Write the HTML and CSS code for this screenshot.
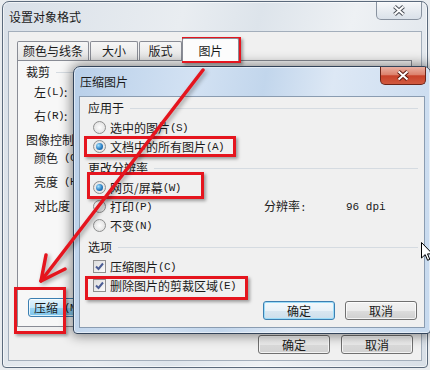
FILE: index.html
```html
<!DOCTYPE html>
<html lang="zh-CN">
<head>
  <meta charset="UTF-8" />
  <meta name="viewport" content="width=device-width, initial-scale=1.0"/>
  <title>压缩图片</title>

  <link rel="stylesheet" href="styles.css">
</head>
<body>
  <!-- back dialog, inactive -->
  <div class="window outer-window">
    <div class="titlebar">
      <span class="window-title">设置对象格式</span>
      <span class="close-btn">
        <svg width="14" height="11" viewBox="0 0 14 11">
          <path d="M2.5 1.5 L11.5 9.5 M11.5 1.5 L2.5 9.5" stroke="#4a4f57" stroke-width="4" />
          <path d="M2.5 1.5 L11.5 9.5 M11.5 1.5 L2.5 9.5" stroke="#fff" stroke-width="2" />
        </svg>
      </span>
    </div>
    <div class="client outer-client">
      <div class="tabs">
        <div class="tab">颜色与线条</div>
        <div class="tab">大小</div>
        <div class="tab">版式</div>
        <div class="tab active">图片</div>
      </div>
      <div class="tab-panel">
        <div class="group-title">裁剪</div>
        <div class="field">左<span class="key">(L)</span>:</div>
        <div class="field">右<span class="key">(R)</span>:</div>
        <div class="group-title spaced">图像控制</div>
        <div class="field field-tight">颜色<span class="key">&nbsp;(C)</span>:</div>
        <div class="field">亮度<span class="key">&nbsp;(H)</span>:</div>
        <div class="field">对比度</div>
        <button class="btn btn-hover compress-btn">压缩<span class="key">&nbsp;(M)...</span></button>
      </div>
      <div class="actions">
        <button class="btn">确定</button>
        <button class="btn">取消</button>
      </div>
    </div>
  </div>

  <!-- front dialog -->
  <div class="window dialog">
    <div class="titlebar">
      <span class="window-title">压缩图片</span>
      <span class="close-btn close-active">
        <svg width="14" height="11" viewBox="0 0 14 11">
          <path d="M2.5 1.5 L11.5 9.5 M11.5 1.5 L2.5 9.5" stroke="#5a1a10" stroke-width="4" />
          <path d="M2.5 1.5 L11.5 9.5 M11.5 1.5 L2.5 9.5" stroke="#fff" stroke-width="2" />
        </svg>
      </span>
    </div>
    <div class="client dialog-client">
      <div class="group">
        <div class="group-title">应用于</div>
        <label class="option"><span class="radio"></span>选中的图片<span class="key">(S)</span></label>
        <label class="option"><span class="radio checked"></span>文档中的所有图片<span class="key">(A)</span></label>
      </div>

      <div class="group">
        <div class="group-title">更改分辨率</div>
        <label class="option"><span class="radio checked"></span>网页/屏幕<span class="key">(W)</span></label>
        <div class="option">
          <span class="option-label"><span class="radio"></span>打印<span class="key">(P)</span></span>
          <span class="res-label">分辨率<span class="key">:</span></span>
          <span class="mono">96 dpi</span>
        </div>
        <label class="option"><span class="radio"></span>不变<span class="key">(N)</span></label>
      </div>

      <div class="group">
        <div class="group-title">选项</div>
        <label class="option">
          <span class="check">
            <svg width="11" height="11" viewBox="0 0 11 11"><path d="M2 5.5 L4.5 8 L9 2.5" fill="none" stroke="#4b5d94" stroke-width="2" /></svg>
          </span>压缩图片<span class="key">(C)</span>
        </label>
        <label class="option">
          <span class="check">
            <svg width="11" height="11" viewBox="0 0 11 11"><path d="M2 5.5 L4.5 8 L9 2.5" fill="none" stroke="#4b5d94" stroke-width="2" /></svg>
          </span>删除图片的剪裁区域<span class="key">(E)</span>
        </label>
      </div>

      <div class="actions">
        <button class="btn btn-default">确定</button>
        <button class="btn">取消</button>
      </div>
    </div>
  </div>

  <!-- red annotations -->
  <div class="mark mark-tab"></div>
  <div class="mark mark-apply"></div>
  <div class="mark mark-web"></div>
  <div class="mark mark-crop"></div>
  <div class="mark mark-compress"></div>

  <svg class="arrow" width="430" height="370" viewBox="0 0 430 370">
    <g fill="none" stroke="#e5151e" stroke-width="3.5" stroke-linecap="round" stroke-linejoin="round">
      <path d="M203 70 L41 281" />
      <path d="M65 269 L41 281 L46 255" />
    </g>
  </svg>

  <svg class="cursor" width="12" height="19" viewBox="0 0 12 19">
    <path d="M0.5 0.5 V16 L4.2 12.6 L6.6 18.3 L8.8 17.4 L6.5 11.9 H11.5 Z" fill="#fff" stroke="#000" />
  </svg>
</body>
</html>
```

FILE: styles.css
```css
* {
  margin: 0;
  padding: 0;
  box-sizing: border-box;
}

body {
  width: 430px;
  height: 370px;
  overflow: hidden;
  position: relative;
  background: #e9ecef;
  font-family: "Noto Sans CJK SC", "Liberation Sans", sans-serif;
  font-size: 12px;
  line-height: 16px;
  color: #1a1a1a;
}

/* windows */

.window {
  display: flex;
  flex-direction: column;
  padding: 0 5px 6px;
  border: 1px solid #5b6a7c;
  border-radius: 7px 7px 4px 4px;
  box-shadow: inset 0 0 0 1px rgba(255, 255, 255, 0.6);
}

.outer-window {
  width: 426px;
  height: 367px;
  margin: 1px 0 0 2px;
  background: linear-gradient(105deg, #d9e0e8 0%, #e9edf1 35%, #dde4eb 50%, #eef1f4 68%, #d8dfe7 100%);
}

.dialog {
  position: absolute;
  left: 73px;
  top: 66px;
  width: 358px;
  height: 268px;
  padding-bottom: 5px;
  border-color: #33445a;
  background: linear-gradient(100deg, #b8cfe9 0%, #d3e2f3 30%, #c2d6ec 48%, #dde8f5 65%, #c6d9ee 100%);
  box-shadow: 0 0 12px 2px rgba(0, 0, 0, 0.45), inset 0 0 0 1px rgba(255, 255, 255, 0.5);
}

.titlebar {
  display: flex;
  flex: none;
  height: 29px;
  padding-left: 1px;
}

.window-title {
  align-self: center;
}

.close-btn {
  margin-left: auto;
  width: 46px;
  height: 18px;
  display: flex;
  align-items: center;
  justify-content: center;
  border: 1px solid #8993a0;
  border-top: 0;
  border-radius: 0 0 5px 5px;
  background: linear-gradient(rgba(255, 255, 255, 0.6), rgba(214, 222, 231, 0.8));
}

.close-active {
  margin-right: -1px;
  border-color: #6b2418;
  background: linear-gradient(#eab0a2 0%, #dc826d 45%, #c8422a 52%, #d15a3f 100%);
}

.client {
  flex: 1;
  display: flex;
  flex-direction: column;
  background: #f0f0f0;
  border: 1px solid #a3aebb;
}

.outer-client {
  padding: 6px 9px 0 8px;
}

.dialog-client {
  padding: 3px 6px 7px 8px;
  border-color: #8a9cb1;
}

/* tabs */

.tabs {
  display: grid;
  grid-template-columns: 72px 48px 43px 55px;
  column-gap: 1px;
  align-items: end;
  height: 22px;
}

.tab {
  height: 19px;
  display: flex;
  align-items: center;
  justify-content: center;
  border: 1px solid #898c95;
  border-bottom: 0;
  border-radius: 2px 2px 0 0;
  background: linear-gradient(#f6f6f6, #e4e4e4);
}

.tab.active {
  height: 23px;
  margin: 0 -1px -1px;
  padding-top: 2px;
  background: #fcfcfc;
  position: relative;
  z-index: 1;
}

.tab-panel {
  height: 267px;
  flex: none;
  display: flex;
  flex-direction: column;
  padding: 3px 8px 9px;
  border: 1px solid #898c95;
  background: #f7f7f7;
}

.group-title {
  display: flex;
  align-items: center;
  height: 16px;
}

.group-title::after {
  content: '';
  flex: 1;
  margin-left: 6px;
  border-top: 1px solid #d5dbe1;
}

.group-title.spaced {
  margin-top: 4px;
}

.field {
  height: 24px;
  display: flex;
  align-items: center;
  padding-left: 8px;
}

.field-tight {
  height: 20px;
  margin-bottom: 2px;
}

.key {
  font-family: "Liberation Mono", monospace;
  font-size: 11px;
  letter-spacing: -0.6px;
}

.mono {
  font-family: "Liberation Mono", monospace;
  font-size: 11px;
}

/* buttons */

.actions {
  display: flex;
  justify-content: flex-end;
  gap: 11px;
}

.outer-client .actions {
  margin: 8px -1px 0 0;
}

.dialog-client .actions {
  margin: auto 1px 0 0;
  gap: 10px;
}

.btn {
  width: 72px;
  height: 19px;
  display: flex;
  align-items: center;
  justify-content: center;
  font: inherit;
  color: #1a1a1a;
  border: 1px solid #707070;
  border-radius: 3px;
  background: linear-gradient(#f2f2f2 0%, #ebebeb 50%, #dddddd 51%, #cfcfcf 100%);
  box-shadow: inset 0 0 0 1px rgba(255, 255, 255, 0.75);
}

.btn-default {
  border-color: #3c7fb1;
  box-shadow: inset 0 0 0 1px #9cdcf8;
  background: linear-gradient(#f4f9fc 0%, #e9f2f8 50%, #d9e7f1 51%, #cddfec 100%);
}

.btn-hover {
  border-color: #3c7fb1;
  background: linear-gradient(#e3f4fc 0%, #c6e8fa 50%, #9dd6f5 51%, #7cc4ea 100%);
}

.compress-btn {
  margin: auto 0 0 2px;
  align-self: flex-start;
  width: 82px;
  padding-left: 5px;
  justify-content: flex-start;
}

/* radios and checkboxes */

.group {
  display: flex;
  flex-direction: column;
}

.group + .group {
  margin-top: 4px;
}

.group .group-title {
  margin-bottom: 2px;
}

.option {
  display: flex;
  align-items: center;
  height: 19px;
}

.option-label {
  display: flex;
  align-items: center;
  width: 176px;
}

.res-label {
  width: 82px;
}

.radio,
.check {
  flex: none;
  width: 13px;
  height: 13px;
  margin: 0 4px 0 5px;
  display: flex;
  align-items: center;
  justify-content: center;
}

.radio {
  border-radius: 50%;
  border: 1px solid #8e8f8f;
  background: radial-gradient(circle, #fdfdfd 0%, #e6e6e6 65%, #cfcfcf 100%);
}

.radio.checked::after {
  content: '';
  width: 7px;
  height: 7px;
  border-radius: 50%;
  background: radial-gradient(circle at 35% 35%, #a6e3ff 0%, #2b80c5 55%, #12477e 100%);
}

.check {
  border: 1px solid #8f8f8f;
  background: linear-gradient(135deg, #dcdcdc, #fbfbfb);
}

/* annotations */

.mark {
  position: absolute;
  border: 3px solid #e5151e;
  box-shadow: 2px 2px 3px rgba(0, 0, 0, 0.35);
}

.mark-tab {
  left: 182px;
  top: 37px;
  width: 59px;
  height: 26px;
}

.mark-apply {
  left: 84px;
  top: 136px;
  width: 152px;
  height: 21px;
}

.mark-web {
  left: 87px;
  top: 172px;
  width: 117px;
  height: 27px;
}

.mark-crop {
  left: 85px;
  top: 276px;
  width: 163px;
  height: 24px;
}

.mark-compress {
  left: 14px;
  top: 287px;
  width: 52px;
  height: 47px;
}

.arrow {
  position: absolute;
  left: 0;
  top: 0;
  filter: drop-shadow(2px 2px 2px rgba(0, 0, 0, 0.35));
}

.cursor {
  position: absolute;
  left: 421px;
  top: 242px;
}
```
